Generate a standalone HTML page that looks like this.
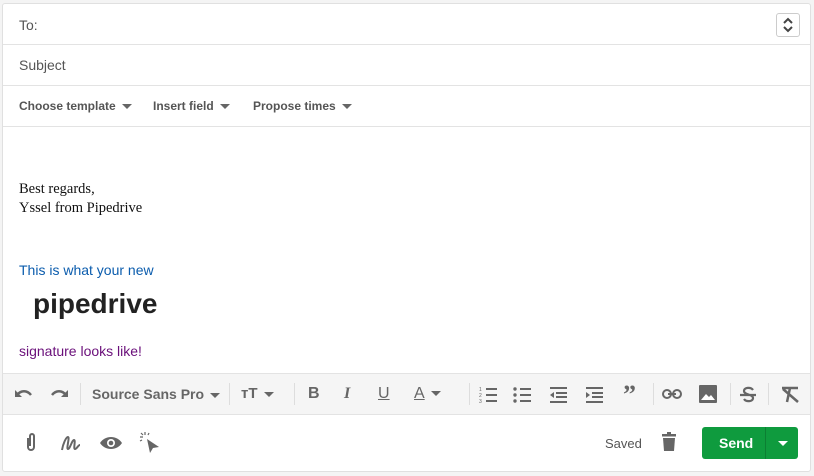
<!DOCTYPE html>
<html><head><style>
body{margin:0;width:814px;height:476px;background:#f4f4f4;font-family:"Liberation Sans",sans-serif;position:relative;overflow:hidden}
.box{position:absolute;left:2px;top:3px;width:807px;height:467px;background:#fff;border:1px solid #e0e0e0;border-radius:3px}
.row{position:absolute;left:0;right:0;border-bottom:1px solid #e3e3e3;color:#555;font-size:14px}
.t{position:absolute;left:16px}
.dd{font-size:12px;font-weight:bold;color:#555;position:absolute;top:95px}
.tri{display:inline-block;width:0;height:0;border-left:5px solid transparent;border-right:5px solid transparent;border-top:5px solid #666;vertical-align:middle;margin-left:6px}
.tb{position:absolute;left:0;right:0;top:369px;height:40px;background:#f5f5f5;border-top:1px solid #e3e3e3;border-bottom:1px solid #e3e3e3}
.ic{position:absolute;top:12px}
.sep{position:absolute;top:9px;width:1px;height:22px;background:#ddd}
</style></head><body>
<div class="box">
<div class="row" style="top:0;height:40px"><span class="t" style="top:13px">To:</span>
<div style="position:absolute;right:10px;top:9px;width:22px;height:22px;border:1px solid #ccc;border-radius:3px;background:#fff"><svg width="22" height="22"><path d="M7 9l4-4 4 4M7 13l4 4 4-4" fill="none" stroke="#444" stroke-width="2"/></svg></div></div>
<div class="row" style="top:41px;height:40px"><span class="t" style="top:12px">Subject</span></div>
<div class="row" style="top:82px;height:40px"></div>
<span class="dd" style="left:16px">Choose template<span class="tri"></span></span>
<span class="dd" style="left:150px">Insert field<span class="tri"></span></span>
<span class="dd" style="left:250px">Propose times<span class="tri"></span></span>
<div style="position:absolute;left:16px;top:176px;font-family:'Liberation Serif',serif;font-size:14.5px;line-height:19px;color:#111">Best regards,<br>Yssel from Pipedrive</div>
<div style="position:absolute;left:16px;top:258px;font-size:14px;color:#0b5cad">This is what your new</div>
<div style="position:absolute;left:30px;top:284px;font-size:28px;font-weight:bold;color:#222;letter-spacing:0px">pipedrive</div>
<div style="position:absolute;left:16px;top:339px;font-size:14px;color:#6a0f7a">signature looks like!</div>
<div class="tb">
<svg class="ic" style="left:10px" width="22" height="16"><path d="M4 9c4-5 10-5 14 0" fill="none" stroke="#666" stroke-width="2.5"/><path d="M2 4v7h7z" fill="#666"/></svg>
<svg class="ic" style="left:45px" width="22" height="16"><path d="M4 9c4-5 10-5 14 0" fill="none" stroke="#666" stroke-width="2.5"/><path d="M20 4v7h-7z" fill="#666"/></svg>
<div class="sep" style="left:77px"></div>
<span style="position:absolute;left:89px;top:12px;font-size:14px;font-weight:bold;color:#666">Source Sans Pro<span class="tri"></span></span>
<div class="sep" style="left:226px"></div>
<span style="position:absolute;left:238px;top:11px;font-size:15px;font-weight:bold;color:#666">тT<span class="tri"></span></span>
<div class="sep" style="left:291px"></div>
<span style="position:absolute;left:305px;top:11px;font-size:16px;font-weight:bold;color:#666">B</span>
<span style="position:absolute;left:341px;top:11px;font-size:16px;font-weight:bold;font-style:italic;color:#666;font-family:'Liberation Serif',serif">I</span>
<span style="position:absolute;left:375px;top:11px;font-size:16px;color:#666;text-decoration:underline">U</span>
<span style="position:absolute;left:411px;top:11px;font-size:16px;color:#666;text-decoration:underline">A<span class="tri"></span></span>
<div class="sep" style="left:466px"></div>
<svg class="ic" style="left:476px" width="20" height="18"><text x="0" y="5" font-size="5" fill="#666">1</text><text x="0" y="11" font-size="5" fill="#666">2</text><text x="0" y="17" font-size="5" fill="#666">3</text><path d="M7 3h11M7 9h11M7 15h11" stroke="#666" stroke-width="2"/></svg>
<svg class="ic" style="left:510px" width="20" height="18"><circle cx="2" cy="3" r="1.7" fill="#666"/><circle cx="2" cy="9" r="1.7" fill="#666"/><circle cx="2" cy="15" r="1.7" fill="#666"/><path d="M7 3h11M7 9h11M7 15h11" stroke="#666" stroke-width="2"/></svg>
<svg class="ic" style="left:546px" width="20" height="18"><path d="M1 2h17M7 7h11M7 11h11M1 16h17" stroke="#666" stroke-width="2"/><path d="M5 6v6l-4-3z" fill="#666"/></svg>
<svg class="ic" style="left:582px" width="20" height="18"><path d="M1 2h17M7 7h11M7 11h11M1 16h17" stroke="#666" stroke-width="2"/><path d="M1 6v6l4-3z" fill="#666"/></svg>
<span style="position:absolute;left:620px;top:6px;font-size:26px;font-weight:bold;color:#666;font-family:'Liberation Serif',serif">”</span>
<div class="sep" style="left:650px"></div>
<svg class="ic" style="left:658px" width="22" height="16"><rect x="2" y="4" width="8" height="8" rx="4" fill="none" stroke="#666" stroke-width="2"/><rect x="12" y="4" width="8" height="8" rx="4" fill="none" stroke="#666" stroke-width="2"/><path d="M7 8h8" stroke="#666" stroke-width="2"/></svg>
<svg class="ic" style="left:695px;top:11px" width="20" height="18"><rect x="1" y="0" width="18" height="18" rx="1" fill="#666"/><path d="M3 15l5-6 3 3 2-2 4 5z" fill="#fff"/></svg>
<div class="sep" style="left:727px"></div>
<svg class="ic" style="left:735px" width="20" height="18"><path d="M15 4c-2-3-9-3-9 1s9 3 9 7-7 4-9 1M2 9h16" fill="none" stroke="#666" stroke-width="2.2"/></svg>
<div class="sep" style="left:765px"></div>
<svg class="ic" style="left:777px" width="22" height="18"><path d="M2 2h16M10 2l-3 14M3 3l15 13" stroke="#666" stroke-width="2.5"/></svg>
</div>
<svg style="position:absolute;left:21px;top:428px" width="14" height="22"><path d="M4 6v9a3 3 0 006 0V4a2 2 0 00-4 0v10" fill="none" stroke="#666" stroke-width="2"/></svg>
<svg style="position:absolute;left:57px;top:430px" width="24" height="18"><path d="M2 16c1-6 4-13 6-13s-2 12 0 12 4-9 6-9-1 9 1 9 3-4 5-4" fill="none" stroke="#666" stroke-width="2"/></svg>
<svg style="position:absolute;left:96px;top:432px" width="24" height="14"><path d="M1 7c5-8 17-8 22 0c-5 8-17 8-22 0z" fill="#666"/><circle cx="12" cy="7" r="4" fill="#fff"/><circle cx="12" cy="7" r="2.3" fill="#666"/></svg>
<svg style="position:absolute;left:136px;top:427px" width="24" height="24"><path d="M8 8l3 14 3-5 6-1z" fill="#666"/><path d="M6 1v3M1 6h3M2 2l2 2M10 2l-1 2M1 10l2-1" stroke="#666" stroke-width="1.2"/></svg>
<span style="position:absolute;left:602px;top:432px;font-size:13px;color:#555">Saved</span>
<svg style="position:absolute;left:659px;top:428px" width="14" height="20"><rect x="0" y="2" width="14" height="2.5" fill="#666"/><rect x="5" y="0" width="4" height="2" fill="#666"/><path d="M1 6h12l-1 13H2z" fill="#666"/></svg>
<div style="position:absolute;left:699px;top:423px;width:96px;height:32px;background:#0f9b3e;border-radius:3px;color:#fff;font-weight:bold;font-size:14px">
<span style="position:absolute;left:17px;top:8px">Send</span>
<div style="position:absolute;left:63px;top:0;width:1px;height:32px;background:#0c7f33"></div>
<span class="tri" style="position:absolute;left:70px;top:14px;border-top-color:#fff"></span></div>
</div>
</body></html>
